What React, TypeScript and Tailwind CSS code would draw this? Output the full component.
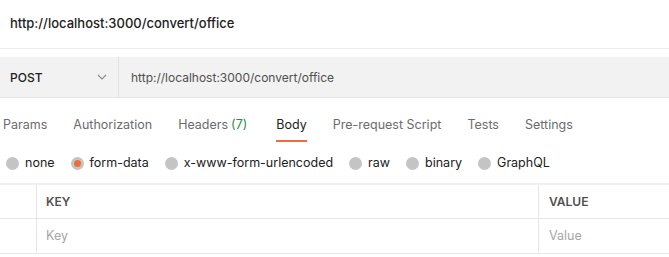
export default function App() {
  const tabs = [
    { label: "Params" },
    { label: "Authorization" },
    { label: "Headers", count: "(7)" },
    { label: "Body", active: true },
    { label: "Pre-request Script" },
    { label: "Tests" },
    { label: "Settings" },
  ];
  const bodyTypes = ["none", "form-data", "x-www-form-urlencoded", "raw", "binary", "GraphQL"];

  return (
    <div className="w-[669px] h-[257px] overflow-hidden bg-white text-[13px] font-['Inter',sans-serif]">
      {/* title */}
      <div className="h-[49px] flex items-center pl-[10px] border-b border-[#ededed] text-[#212121] font-medium">
        http://localhost:3000/convert/office
      </div>

      {/* request bar */}
      <div className="mt-[8px] h-[41px] flex bg-[#f2f2f2] border-b border-[#e6e6e6]">
        <div className="w-[119px] flex items-center justify-between pl-[10px] pr-[11px] border-r border-[#e0e0e0]">
          <span className="text-[#212121] font-medium text-[12px] mt-[1px]">POST</span>
          <svg width="10" height="6" viewBox="0 0 10 6" fill="none">
            <path d="M1 1l4 4 4-4" stroke="#8a8a8a" strokeWidth="1.1" />
          </svg>
        </div>
        <div className="flex items-center pl-[12px] text-[#505050] text-[12px] mt-[1px]">
          http://localhost:3000/convert/office
        </div>
      </div>

      {/* tabs */}
      <div className="mt-[13px] h-[33px] flex pl-[3px] gap-[26px] text-[#6b6b6b] text-[12.5px]">
        {tabs.map((t) => (
          <div key={t.label} className="relative flex items-center pb-[4px]">
            <span className={t.active ? "text-[#212121]" : ""}>
              {t.label}
              {t.count && <span className="ml-[3px] mr-[3px] text-[#2e8a3e]">{t.count}</span>}
            </span>
            {t.active && <div className="absolute left-0 right-0 bottom-[2px] h-[2px] bg-[#f26b3a]" />}
          </div>
        ))}
      </div>

      {/* body types */}
      <div className="h-[39px] flex items-center pl-[6px] gap-[16px] text-[#212121] text-[12.5px]">
        {bodyTypes.map((b) => (
          <div key={b} className="flex items-center gap-[6px]">
            {b === "form-data" ? (
              <span className="w-[13px] h-[13px] rounded-full bg-[#c4c4c4] flex items-center justify-center">
                <span className="w-[7px] h-[7px] rounded-full bg-[#f26b3a]" />
              </span>
            ) : (
              <span className="w-[13px] h-[13px] rounded-full bg-[#c4c4c4]" />
            )}
            <span>{b}</span>
          </div>
        ))}
      </div>

      {/* table */}
      <div className="border-t-2 border-[#f0f0f0]">
        <div className="flex h-[34px] border-b border-[#e6e6e6]">
          <div className="w-[37px] border-r border-[#e6e6e6]" />
          <div className="w-[502px] flex items-center pl-[9px] border-r border-[#e6e6e6] font-semibold text-[#505050] text-[12px]">
            KEY
          </div>
          <div className="flex-1 flex items-center pl-[10px] font-semibold text-[#505050] text-[12px]">VALUE</div>
        </div>
        <div className="flex h-[35px] border-b border-[#e6e6e6]">
          <div className="w-[37px] border-r border-[#e6e6e6]" />
          <div className="w-[502px] flex items-center pl-[9px] border-r border-[#e6e6e6] text-[#a6a6a6] text-[12.5px]">
            Key
          </div>
          <div className="flex-1 flex items-center pl-[10px] text-[#a6a6a6] text-[12.5px]">Value</div>
        </div>
      </div>
    </div>
  );
}
